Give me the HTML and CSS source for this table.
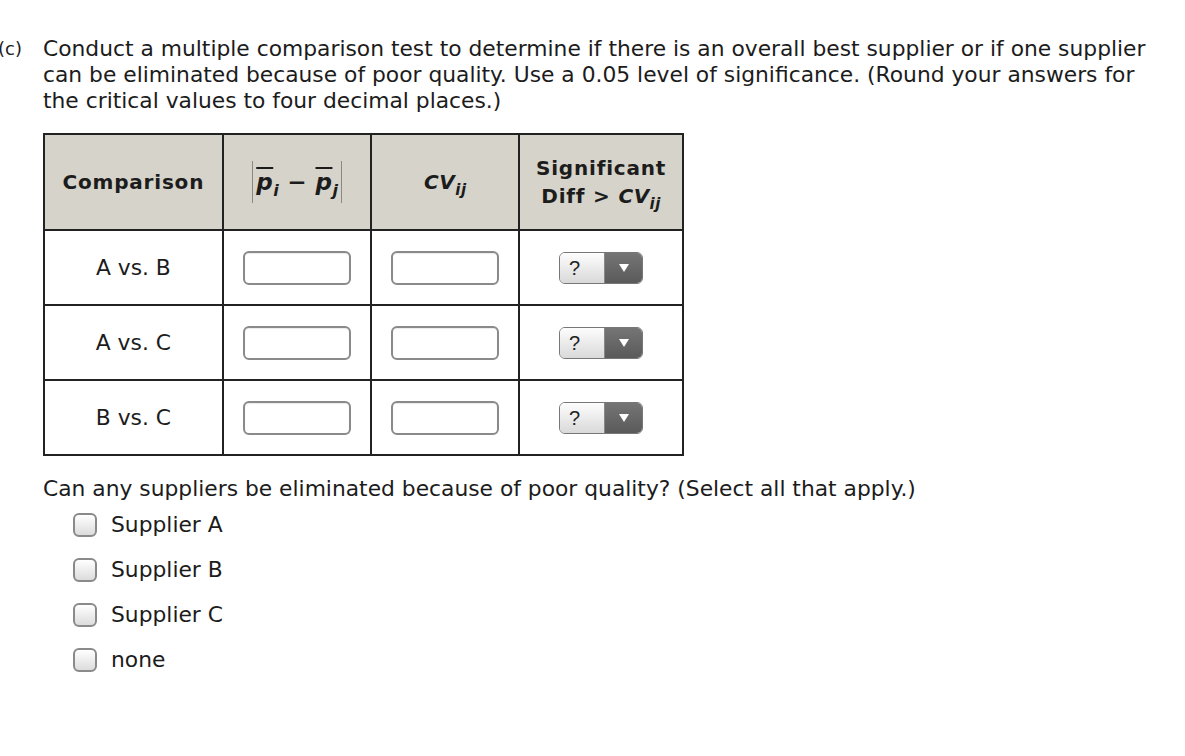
FILE: index.html
```html
<!DOCTYPE html>
<html>
<head>
<meta charset="utf-8">
<link rel="stylesheet" href="styles.css">
</head>
<body>
<div class="part">
  <div class="label">(c)</div>
  <div class="content">
    <p class="question">Conduct a multiple comparison test to determine if there is an overall best supplier or if one supplier can be eliminated because of poor quality. Use a 0.05 level of significance. (Round your answers for the critical values to four decimal places.)</p>
    <table class="cmp">
      <thead>
        <tr>
          <th class="c1">Comparison</th>
          <th class="c2"><span class="abs"><span class="pv">p</span><sub>i</sub> − <span class="pv">p</span><sub>j</sub></span></th>
          <th class="c3"><span class="mi">CV</span><sub class="mi">ij</sub></th>
          <th class="c4">Significant<br>Diff &gt; <span class="mi">CV</span><sub class="mi">ij</sub></th>
        </tr>
      </thead>
      <tbody>
        <tr>
          <td>A vs. B</td>
          <td><span class="inp"></span></td>
          <td><span class="inp"></span></td>
          <td><span class="sel"><span class="q">?</span><span class="arr"><svg width="10" height="8" viewBox="0 0 10 8"><path d="M0 0 H10 L5 8 Z" fill="#fff"/></svg></span></span></td>
        </tr>
        <tr>
          <td>A vs. C</td>
          <td><span class="inp"></span></td>
          <td><span class="inp"></span></td>
          <td><span class="sel"><span class="q">?</span><span class="arr"><svg width="10" height="8" viewBox="0 0 10 8"><path d="M0 0 H10 L5 8 Z" fill="#fff"/></svg></span></span></td>
        </tr>
        <tr>
          <td>B vs. C</td>
          <td><span class="inp"></span></td>
          <td><span class="inp"></span></td>
          <td><span class="sel"><span class="q">?</span><span class="arr"><svg width="10" height="8" viewBox="0 0 10 8"><path d="M0 0 H10 L5 8 Z" fill="#fff"/></svg></span></span></td>
        </tr>
      </tbody>
    </table>
    <p class="ask">Can any suppliers be eliminated because of poor quality? (Select all that apply.)</p>
    <ul class="opts">
      <li><span class="cb"></span>Supplier A</li>
      <li><span class="cb"></span>Supplier B</li>
      <li><span class="cb"></span>Supplier C</li>
      <li><span class="cb"></span>none</li>
    </ul>
  </div>
</div>
</body>
</html>
```

FILE: styles.css
```css
html, body {
  margin: 0;
  padding: 0;
  background: #fff;
}
body {
  font-family: "DejaVu Sans", Verdana, sans-serif;
  color: #1c1c1c;
  font-size: 21.8px;
}
.part {
  display: flex;
  padding-top: 36px;
}
.label {
  width: 45px;
  margin-left: -2px;
  flex: none;
  font-size: 18px;
  line-height: 26px;
}
.content {
  flex: 1;
  padding-right: 20px;
}
.question {
  margin: 0;
  line-height: 26px;
  width: 1110px;
}
.cmp {
  margin-top: 19px;
  border-collapse: collapse;
  width: 641px;
}
.cmp th, .cmp td {
  border: 2px solid #222;
  text-align: center;
  padding: 0;
}
.cmp th {
  background: #d6d3ca;
  height: 94px;
  font-weight: bold;
  font-size: 20px;
  letter-spacing: 0.8px;
  line-height: 28px;
}
.cmp td {
  height: 73px;
  font-size: 21.8px;
}
.c1 { width: 177px; }
.c2 { width: 147px; }
.c3 { width: 146px; }
.c4 { width: 162px; }
.mi { font-style: italic; letter-spacing: 0.5px; }
sub {
  font-size: 15px;
  vertical-align: -6px;
  line-height: 0;
  letter-spacing: 0;
}
.abs {
  display: inline-block;
  border-left: 1px solid #888;
  border-right: 1px solid #888;
  padding: 0 3px;
  line-height: 42px;
  font-style: italic;
  font-size: 23px;
  letter-spacing: 0.5px;
}
.abs sub { font-style: italic; font-size: 16px; }
.pv {
  text-decoration: overline;
}
.inp {
  display: inline-block;
  vertical-align: middle;
  width: 104px;
  height: 30px;
  border: 2px solid #8a8a8a;
  border-radius: 6px;
  background: #fff;
  box-shadow: inset 0 1px 1px rgba(0,0,0,0.08);
}
.sel {
  display: inline-flex;
  vertical-align: middle;
  width: 84px;
  height: 32px;
  border-radius: 6px;
  overflow: hidden;
  box-sizing: border-box;
  border: 1px solid #777;
}
.q {
  flex: 1;
  font-family: "Liberation Sans", Arial, sans-serif;
  font-size: 20px;
  color: #222;
  text-align: left;
  padding-left: 9px;
  line-height: 30px;
  background: linear-gradient(#fdfdfd, #d9d9d9);
  border-right: 1px solid #888;
}
.arr {
  width: 37px;
  background: linear-gradient(#757575, #5a5a5a);
  display: flex;
  align-items: center;
  justify-content: center;
}
.ask {
  margin: 20px 0 0;
  line-height: 26px;
}
.opts {
  list-style: none;
  margin: 0;
  padding: 0 0 0 30px;
}
.opts li {
  display: flex;
  align-items: center;
  height: 45px;
  line-height: 26px;
}
.cb {
  display: inline-block;
  width: 20px;
  height: 20px;
  border: 2px solid #8a8a8a;
  border-radius: 6px;
  background: linear-gradient(#ffffff, #dcdcdc);
  margin-right: 14px;
}
```
